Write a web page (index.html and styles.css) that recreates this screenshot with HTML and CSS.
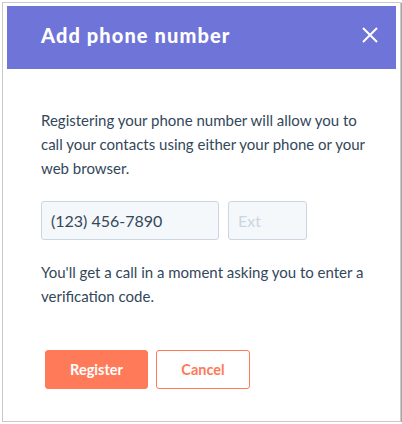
FILE: index.html
```html
<!DOCTYPE html>
<html lang="en">
<head>
<meta charset="utf-8">
<title>Add phone number</title>
<link rel="stylesheet" href="styles.css">
</head>
<body>
<div class="dialog">
  <div class="dialog-header">
    <h1>Add phone number</h1>
    <button type="button" class="close" aria-label="Close">
      <svg width="16" height="16" viewBox="0 0 16 16"><path d="M1 1L15 15M15 1L1 15" stroke="#fff" stroke-width="2" fill="none"/></svg>
    </button>
  </div>
  <div class="dialog-body">
    <p>Registering your phone number will allow you to call your contacts using either your phone or your web browser.</p>
    <form class="phone-row">
      <input type="text" class="phone" value="(123) 456-7890">
      <input type="text" class="ext" placeholder="Ext">
    </form>
    <p>You'll get a call in a moment asking you to enter a verification code.</p>
  </div>
  <div class="dialog-footer">
    <button type="button" class="btn btn-primary">Register</button>
    <button type="button" class="btn btn-secondary">Cancel</button>
  </div>
</div>
</body>
</html>
```

FILE: styles.css
```css
html, body {
    margin: 0;
    padding: 0;
    background: #ffffff;
}

body {
    font-family: Lato, "Noto Sans", sans-serif;
    color: #33475b;
    padding: 2px 0 0 2px;
}

.dialog {
    width: 389px;
    height: 415px;
    border: 1px solid #c9c9c9;
    box-shadow: 1px 1px 1px rgba(0, 0, 0, 0.35);
    padding: 3px 4px 0 4px;
    box-sizing: content-box;
}

.dialog-header {
    background: #6f74d8;
    height: 63px;
    box-sizing: border-box;
    display: flex;
    align-items: center;
    justify-content: space-between;
    padding: 0 18px 6px 34px;
}

.dialog-header h1 {
    margin: 0;
    color: #ffffff;
    font-size: 20px;
    font-weight: 900;
    letter-spacing: 1.1px;
}

.close {
    background: none;
    border: 0;
    padding: 0;
    width: 16px;
    height: 16px;
    cursor: pointer;
}

.dialog-body {
    padding: 39px 22px 0 34px;
}

.dialog-body p {
    margin: 0;
    font-size: 15px;
    line-height: 24px;
}

.phone-row {
    display: flex;
    gap: 9px;
    margin: 21px 0 20px 0;
}

.phone-row input {
    height: 39px;
    box-sizing: border-box;
    background: #f5f8fa;
    border: 1px solid #cbd6e2;
    border-radius: 3px;
    font-family: Lato, "Noto Sans", sans-serif;
    font-size: 16px;
    color: #33475b;
    padding: 0 9px;
    outline: none;
}

.phone {
    width: 178px;
}

.ext {
    width: 79px;
}

.ext::placeholder {
    color: #cbd6e2;
}

.dialog-footer {
    display: flex;
    gap: 8px;
    padding: 42px 0 0 38px;
}

.btn {
    height: 39px;
    border-radius: 3px;
    font-family: Lato, "Noto Sans", sans-serif;
    font-size: 14.5px;
    font-weight: 700;
    cursor: pointer;
}

.btn-primary {
    width: 103px;
    background: #ff7a59;
    border: 1px solid #ff7a59;
    color: #ffffff;
}

.btn-secondary {
    width: 94px;
    background: #ffffff;
    border: 1px solid #ff7a59;
    color: #ff7a59;
}
```
